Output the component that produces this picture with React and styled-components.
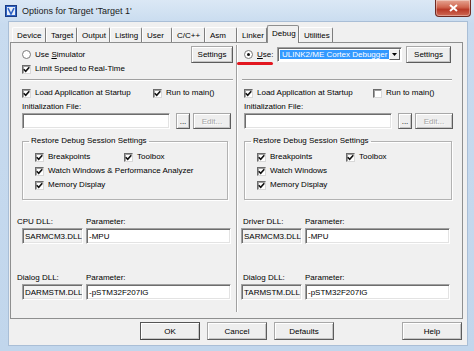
import styled, { createGlobalStyle } from "styled-components";

const GlobalStyle = createGlobalStyle`
  html, body {
    margin: 0;
    padding: 0;
  }
  body {
    width: 474px;
    height: 351px;
    overflow: hidden;
    background: #c4d8ee;
    font-family: "Liberation Sans", Arial, sans-serif;
    font-size: 8px;
    font-weight: 400;
    color: #000;
  }
  * {
    box-sizing: border-box;
  }
`;

const tabs = [
  { label: "Device", w: 34 },
  { label: "Target", w: 31 },
  { label: "Output", w: 33 },
  { label: "Listing", w: 32 },
  { label: "User", w: 30 },
  { label: "C/C++", w: 33 },
  { label: "Asm", w: 32 },
  { label: "Linker", w: 30 },
  { label: "Debug", w: 32, active: true },
  { label: "Utilities", w: 34 },
];

const sides = {
  left: {
    loadW: 131,
    runToMain: true,
    groupW: 206,
    watch: "Watch Windows & Performance Analyzer",
    dllLabel: "CPU DLL:",
    dll: "SARMCM3.DLL",
    dialog: "DARMSTM.DLL",
    gridShift: 0,
    labelShift: -5,
  },
  right: {
    loadW: 129,
    runToMain: false,
    groupW: 208,
    watch: "Watch Windows",
    dllLabel: "Driver DLL:",
    dll: "SARMCM3.DLL",
    dialog: "TARMSTM.DLL",
    gridShift: -3,
    labelShift: 2,
  },
};

const Check = ({ checked, w, children }) => (
  <Option $w={w}>
    <CheckBox>
      {checked && (
        <svg width="7" height="7" viewBox="0 0 7 7">
          <path d="M0.7 3.3 L2.7 5.3 L6.3 1.2" fill="none" stroke="#111" strokeWidth="1.6" />
        </svg>
      )}
    </CheckBox>
    <span>{children}</span>
  </Option>
);

const Radio = ({ checked, w, children }) => (
  <Option $w={w}>
    <RadioDot>{checked && <Dot />}</RadioDot>
    <span>{children}</span>
  </Option>
);

const DebugSection = ({ side }) => (
  <>
    <Separator />
    <Row $h={12} $mt={6}>
      <Check checked w={side.loadW}>Load Application at Startup</Check>
      <Check checked={side.runToMain}>Run to main()</Check>
    </Row>
    <Row $h={12} $mt={2}>
      <Label>Initialization File:</Label>
    </Row>
    <Row $h={16}>
      <TextBox $w={148} />
      <Button $w={14} $h={16} $ml={6}>...</Button>
      <Button $w={38} $h={16} $ml={3} disabled>Edit...</Button>
    </Row>
    <GroupBox $w={side.groupW}>
      <Legend>Restore Debug Session Settings</Legend>
      <GroupRow>
        <Check checked w={89}>Breakpoints</Check>
        <Check checked>Toolbox</Check>
      </GroupRow>
      <GroupRow>
        <Check checked>{side.watch}</Check>
      </GroupRow>
      <GroupRow>
        <Check checked>Memory Display</Check>
      </GroupRow>
    </GroupBox>
    <DllGrid $ml={side.gridShift} $mt={16}>
      <Label $shift={side.labelShift}>{side.dllLabel}</Label>
      <Label>Parameter:</Label>
      <TextBox $w={61} $bg="#f3f3f3">{side.dll}</TextBox>
      <TextBox $w={145}>-MPU</TextBox>
    </DllGrid>
    <DllGrid $ml={side.gridShift} $mt={28}>
      <Label $shift={side.labelShift}>Dialog DLL:</Label>
      <Label>Parameter:</Label>
      <TextBox $w={61} $bg="#f3f3f3">{side.dialog}</TextBox>
      <TextBox $w={145}>-pSTM32F207IG</TextBox>
    </DllGrid>
  </>
);

const App = () => {
  return (
    <>
      <GlobalStyle />
      <Window>
        <TitleBar>
          <svg width="12" height="12" viewBox="0 0 12 12">
            <rect x="0.5" y="0.5" width="11" height="11" fill="#2f63c4" stroke="#1b3c84" />
            <rect x="2" y="2" width="8" height="8" fill="#e8eef8" />
            <path d="M3 3.2 L6 9 L9 3.2" fill="none" stroke="#2f63c4" strokeWidth="1.6" />
          </svg>
          <Title>Options for Target 'Target 1'</Title>
          <CloseButton>
            <svg width="9" height="8" viewBox="0 0 9 8">
              <path d="M1 1 L8 7 M8 1 L1 7" stroke="#fff" strokeWidth="2" />
            </svg>
          </CloseButton>
        </TitleBar>
        <Client>
          <TabStrip>
            {tabs.map((t) => (
              <Tab key={t.label} $w={t.w} $active={t.active}>
                {t.label}
              </Tab>
            ))}
          </TabStrip>
          <TabPanel>
            <Column $pad="3px 3px 0 11px" $w={225}>
              <Row $h={17} $between>
                <Radio>
                  Use <u>S</u>imulator
                </Radio>
                <Button $w={42}>Settings</Button>
              </Row>
              <Row $h={12}>
                <Check checked>Limit Speed to Real-Time</Check>
              </Row>
              <Row $h={4} />
              <DebugSection side={sides.left} />
            </Column>
            <Divider />
            <Column $pad="3px 10px 0 6px" $w={224}>
              <Row $h={17}>
                <Radio checked w={33}>
                  <u>U</u>se:
                </Radio>
                <Combo>
                  <ComboText>ULINK2/ME Cortex Debugger</ComboText>
                  <ComboArrow>
                    <svg width="5" height="3" viewBox="0 0 5 3">
                      <path d="M0 0 H5 L2.5 3 Z" fill="#000" />
                    </svg>
                  </ComboArrow>
                </Combo>
                <Button $w={45} $ml={4}>Settings</Button>
              </Row>
              <Row $h={12} />
              <Row $h={4} />
              <DebugSection side={sides.right} />
            </Column>
          </TabPanel>
          <ButtonRow>
            <Button $w={60} $h={18} $default>OK</Button>
            <Button $w={60} $h={18}>Cancel</Button>
            <Button $w={60} $h={18}>Defaults</Button>
            <Button $w={60} $h={18} $ml="auto">Help</Button>
          </ButtonRow>
        </Client>
        <Mark />
      </Window>
    </>
  );
};

export default App;

const Window = styled.div`
  position: relative;
  width: 474px;
  height: 351px;
  display: flex;
  flex-direction: column;
  background: linear-gradient(180deg, #dbe8f5 0px, #c8dbef 24px, #c1d6ec 100%);
`;

const TitleBar = styled.div`
  height: 22px;
  display: flex;
  align-items: center;
  padding-left: 5px;
  flex-shrink: 0;
`;

const Title = styled.div`
  margin-left: 5px;
  font-size: 9px;
  color: #1b1b1b;
  white-space: nowrap;
`;

const CloseButton = styled.div`
  align-self: flex-start;
  margin: 0 3px 0 auto;
  width: 36px;
  height: 17px;
  display: flex;
  align-items: center;
  justify-content: center;
  border: 1px solid #6e2a22;
  border-top: none;
  border-radius: 0 0 4px 4px;
  background: linear-gradient(180deg, #e6a593 0%, #d0654f 45%, #b83a28 60%, #cf6a55 100%);
  box-shadow: inset 0 0 0 1px rgba(255, 255, 255, 0.35);
`;

const Client = styled.div`
  flex: 1;
  margin: 0 7px 6px 9px;
  padding: 3px 4px 4px 1px;
  display: flex;
  flex-direction: column;
  background: #f0f0f0;
  box-shadow: 0 0 0 1px #a9bed6;
`;

const TabStrip = styled.div`
  height: 17px;
  display: flex;
  align-items: flex-end;
  padding-left: 2px;
  flex-shrink: 0;
`;

const Tab = styled.div`
  position: relative;
  z-index: ${(p) => (p.$active ? 2 : 1)};
  width: ${(p) => p.$w}px;
  height: ${(p) => (p.$active ? 18 : 15)}px;
  margin-bottom: ${(p) => (p.$active ? -1 : 0)}px;
  padding: 0 0 ${(p) => (p.$active ? 3 : 0)}px 4px;
  display: flex;
  align-items: center;
  white-space: nowrap;
  background: #f0f0f0;
  border-top: 1px solid ${(p) => (p.$active ? "#8e8f8f" : "#fdfdfd")};
  border-left: 1px solid ${(p) => (p.$active ? "#8e8f8f" : "#fdfdfd")};
  border-right: 1px solid #7d7d7d;
  border-radius: 2px 2px 0 0;
`;

const TabPanel = styled.div`
  height: 277px;
  flex-shrink: 0;
  display: flex;
  border: 1px solid #8e8f8f;
  background: #f0f0f0;
`;

const Column = styled.div`
  width: ${(p) => p.$w}px;
  padding: ${(p) => p.$pad};
  display: flex;
  flex-direction: column;
`;

const Divider = styled.div`
  width: 2px;
  margin: 2px 0 6px;
  border-left: 1px solid #a0a0a0;
  border-right: 1px solid #fff;
`;

const Row = styled.div`
  height: ${(p) => p.$h}px;
  margin-top: ${(p) => p.$mt || 0}px;
  display: flex;
  align-items: center;
  justify-content: ${(p) => (p.$between ? "space-between" : "flex-start")};
  flex-shrink: 0;
`;

const Separator = styled.div`
  height: 2px;
  margin: 0 0 0 -2px;
  border-top: 1px solid #a0a0a0;
  border-bottom: 1px solid #fff;
`;

const Option = styled.label`
  display: inline-flex;
  align-items: center;
  gap: 4px;
  width: ${(p) => (p.$w ? `${p.$w}px` : "auto")};
  flex-shrink: 0;
  white-space: nowrap;
  line-height: 12px;
`;

const CheckBox = styled.span`
  width: 9px;
  height: 9px;
  display: inline-flex;
  align-items: center;
  justify-content: center;
  background: #fff;
  border: 1px solid;
  border-color: #6b6b6b #d8d8d8 #d8d8d8 #6b6b6b;
  box-shadow: inset 1px 1px 0 #a0a0a0;
`;

const RadioDot = styled.span`
  width: 9px;
  height: 9px;
  border-radius: 50%;
  display: inline-flex;
  align-items: center;
  justify-content: center;
  background: #fff;
  border: 1px solid #7a7a7a;
`;

const Dot = styled.span`
  width: 3px;
  height: 3px;
  border-radius: 50%;
  background: #111;
`;

const Label = styled.div`
  line-height: 12px;
  height: 12px;
  font-weight: 400;
  white-space: nowrap;
  margin-left: ${(p) => p.$shift || 0}px;
`;

const Button = styled.button`
  width: ${(p) => p.$w}px;
  height: ${(p) => p.$h || 17}px;
  margin: 0 0 0 ${(p) => (p.$ml === "auto" ? "auto" : `${p.$ml || 0}px`)};
  padding: 0;
  flex-shrink: 0;
  font: inherit;
  color: ${(p) => (p.disabled ? "#a3a3a3" : "#000")};
  text-shadow: ${(p) => (p.disabled ? "1px 1px 0 #fff" : "none")};
  background: #eeeeee;
  border: 1px solid;
  border-color: ${(p) => (p.$default ? "#555 #444 #444 #555" : "#a8a8a8 #5c5c5c #5c5c5c #a8a8a8")};
  box-shadow: inset 1px 1px 0 #fff, inset -1px -1px 0 #c4c4c4;
`;

const TextBox = styled.div`
  width: ${(p) => p.$w}px;
  height: 16px;
  padding-left: 2px;
  display: flex;
  align-items: center;
  white-space: nowrap;
  overflow: hidden;
  flex-shrink: 0;
  background: ${(p) => p.$bg || "#fff"};
  border: 1px solid;
  border-color: #a0a0a0 #fff #fff #a0a0a0;
  box-shadow: inset 1px 1px 0 #6d6d6d, inset -1px -1px 0 #e3e3e3;
`;

const GroupBox = styled.fieldset`
  width: ${(p) => p.$w}px;
  margin: 6px 0 0;
  padding: 3px 0 7px 0;
  min-width: 0;
  border: 1px solid #b2b2b2;
  box-shadow: inset 1px 1px 0 #fff, 1px 1px 0 #fff;
`;

const Legend = styled.legend`
  margin-left: 6px;
  padding: 0 2px;
  line-height: 12px;
  font-weight: 400;
  white-space: nowrap;
`;

const GroupRow = styled.div`
  height: 14px;
  padding-left: 12px;
  display: flex;
  align-items: center;
`;

const DllGrid = styled.div`
  display: grid;
  grid-template-columns: 61px 145px;
  column-gap: 3px;
  margin: ${(p) => p.$mt}px 0 0 ${(p) => p.$ml}px;
`;

const Combo = styled.div`
  width: 125px;
  height: 15px;
  padding: 2px 1px 2px 2px;
  display: flex;
  flex-shrink: 0;
  background: #fff;
  border: 1px solid;
  border-color: #a0a0a0 #fff #fff #a0a0a0;
  box-shadow: inset 1px 1px 0 #6d6d6d;
`;

const ComboText = styled.div`
  flex: 1;
  padding-left: 2px;
  line-height: 9px;
  color: #fff;
  background: #3399ff;
  white-space: nowrap;
  overflow: hidden;
`;

const ComboArrow = styled.div`
  width: 11px;
  margin: -1px 0;
  display: flex;
  align-items: center;
  justify-content: center;
  background: #eee;
  border: 1px solid;
  border-color: #fff #5c5c5c #5c5c5c #fff;
`;

const ButtonRow = styled.div`
  margin-top: 3px;
  padding: 0 1px 0 130px;
  display: flex;
  gap: 7px;
`;

const Mark = styled.div`
  position: absolute;
  left: 237px;
  top: 62px;
  width: 36px;
  height: 3px;
  border-radius: 2px;
  background: #e2171f;
`;
